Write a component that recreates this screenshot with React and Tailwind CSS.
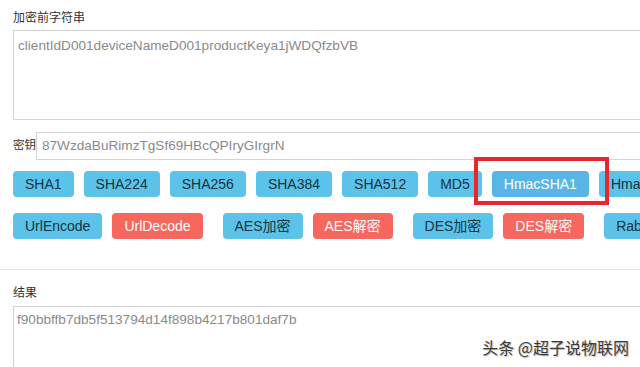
import React from "react";

const font = { fontFamily: '"Liberation Sans", Arial, "Noto Sans CJK SC", sans-serif' };

function Btn({ children, red, className = "" }) {
  return (
    <div
      className={
        "h-[26px] px-3 flex items-center rounded-[4px] text-[14px] whitespace-nowrap shrink-0 " +
        (red ? "bg-[#f7675e] text-white " : "bg-[#5bc2ea] text-[#15323f] ") +
        className
      }
    >
      {children}
    </div>
  );
}

export default function App() {
  return (
    <div className="relative w-[640px] h-[367px] overflow-hidden bg-white" style={font}>
      <div className="pl-[13px]">
        <div className="mt-[10px] h-[16px] leading-[16px] text-[12px] text-[#333]">加密前字符串</div>
        <div className="mt-[4px] w-[700px] h-[90px] border border-[#d4d4d4] px-[4px] pt-[7px] text-[13.6px] leading-[16px] text-[#8a8a8a]">
          clientIdD001deviceNameD001productKeya1jWDQfzbVB
        </div>
        <div className="mt-[12px] flex items-center h-[28px]">
          <div className="w-[23px] shrink-0 whitespace-nowrap text-[11.5px] text-[#333]">密钥</div>
          <div className="w-[700px] shrink-0 h-[28px] border border-[#d4d4d4] px-[5px] flex items-center text-[13.6px] text-[#8a8a8a]">
            87WzdaBuRimzTgSf69HBcQPIryGIrgrN
          </div>
        </div>
        <div className="mt-[11px] flex gap-[10px] w-[800px]">
          <Btn>SHA1</Btn>
          <Btn>SHA224</Btn>
          <Btn>SHA256</Btn>
          <Btn>SHA384</Btn>
          <Btn>SHA512</Btn>
          <Btn>MD5</Btn>
          <div className="relative shrink-0">
            <Btn className="!bg-[#58b6e6] !text-white">HmacSHA1</Btn>
            <div className="absolute left-[-18px] right-[-20px] top-[-14px] bottom-[-8px] border-[4px] border-[#e8262b]"></div>
          </div>
          <Btn>HmacSHA256</Btn>
        </div>
        <div className="mt-[16px] flex gap-[10px] w-[800px]">
          <Btn>UrlEncode</Btn>
          <Btn red>UrlDecode</Btn>
          <Btn className="ml-[10px]">AES加密</Btn>
          <Btn red>AES解密</Btn>
          <Btn className="ml-[10px]">DES加密</Btn>
          <Btn red>DES解密</Btn>
          <Btn className="ml-[10px]">Rabbit加密</Btn>
        </div>
      </div>
      <div className="mt-[30px] h-px bg-[#e3e3e3]"></div>
      <div className="pl-[13px]">
        <div className="mt-[15px] h-[16px] leading-[16px] text-[12px] text-[#333]">结果</div>
        <div className="mt-[5px] w-[700px] h-[90px] border border-[#d4d4d4] px-[3px] pt-[5px] text-[13.6px] leading-[16px] text-[#8a8a8a]">
          f90bbffb7db5f513794d14f898b4217b801daf7b
        </div>
      </div>
      <div
        className="absolute right-[11px] bottom-[8px] text-[16px] text-[#3a3a3a]"
        style={{ fontFamily: '"Noto Sans CJK SC", sans-serif', textShadow: "1px 1px 1px #bbb" }}
      >
        头条 @超子说物联网
      </div>
    </div>
  );
}
